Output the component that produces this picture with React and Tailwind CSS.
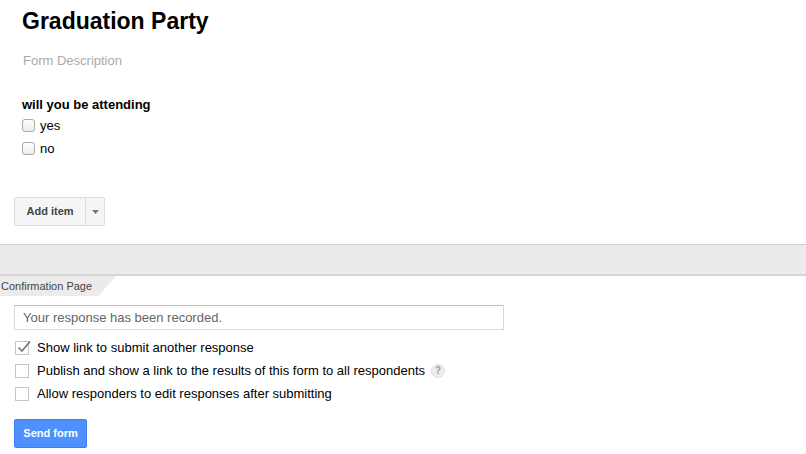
import React from 'react'

function RoundBox() {
  return (
    <span className="inline-block w-[13px] h-[13px] rounded-[3px] border border-[#a9a9a9] bg-gradient-to-b from-white to-[#ececec]" />
  )
}

function SquareBox({ checked }) {
  return (
    <span className="relative inline-block w-[14px] h-[14px] border border-[#c6c6c6] bg-white shrink-0">
      {checked && (
        <svg className="absolute -top-[3px] left-0" width="16" height="16" viewBox="0 0 16 16">
          <path d="M2.5 8.5 L6 12 L14 2.5" fill="none" stroke="#777" strokeWidth="1.7" />
        </svg>
      )}
    </span>
  )
}

export default function App() {
  return (
    <div className="w-[806px] h-[454px] bg-white overflow-hidden font-['Liberation_Sans',Arial,sans-serif] text-[13px] text-[#222]">
      <div className="pl-[22px] pt-[6px]">
        <h1 className="text-[23px] font-bold text-black leading-[30px]">Graduation Party</h1>
        <div className="pl-[1px] mt-[17px] text-[#aaa] leading-[16px]">Form Description</div>
        <div className="mt-[28px] font-bold text-black leading-[16px]">will you be attending</div>
        <div className="mt-[6px] flex flex-col gap-[10px]">
          <label className="flex items-center gap-[5px] leading-[13px] text-black">
            <RoundBox />
            yes
          </label>
          <label className="flex items-center gap-[5px] leading-[13px] text-black">
            <RoundBox />
            no
          </label>
        </div>
      </div>

      <div className="pl-[14px] mt-[42px]">
        <div className="inline-flex h-[29px] rounded-[2px] border border-[#dcdcdc] bg-[#f5f5f5] text-[11px] font-bold text-[#444]">
          <span className="w-[71px] flex items-center justify-center border-r border-[#dcdcdc]">Add item</span>
          <span className="w-[18px] flex items-center justify-center">
            <svg width="7" height="4" viewBox="0 0 7 4">
              <path d="M0 0 H7 L3.5 4 Z" fill="#777" />
            </svg>
          </span>
        </div>
      </div>

      <div className="mt-[18px] h-[32px] bg-[#ebebeb] border-t border-[#cfcfcf] border-b-2 border-b-[#d6d6d6]" />

      <div className="h-[20px] w-[116px] bg-[#ebebeb] [clip-path:polygon(0_0,100%_0,85%_100%,0_100%)] text-[11px] text-[#444] leading-[20px] pl-[1px]">
        Confirmation Page
      </div>

      <div className="pl-[14px] pt-[9px]">
        <div className="w-[490px] h-[25px] border border-[#d9d9d9] border-t-[#c0c0c0] px-[8px] flex items-center text-[#666]">
          Your response has been recorded.
        </div>
        <div className="mt-[11px] flex flex-col gap-[9px] text-black">
          <label className="flex items-center gap-[8px] leading-[14px] pl-[1px]">
            <SquareBox checked />
            Show link to submit another response
          </label>
          <label className="flex items-center gap-[8px] leading-[14px] pl-[1px]">
            <SquareBox />
            Publish and show a link to the results of this form to all respondents
            <span className="ml-[-2px] w-[14px] h-[14px] rounded-full bg-[#eee] border border-[#ddd] text-[10px] font-bold text-[#999] flex items-center justify-center leading-none">?</span>
          </label>
          <label className="flex items-center gap-[8px] leading-[14px] pl-[1px]">
            <SquareBox />
            Allow responders to edit responses after submitting
          </label>
        </div>
        <button className="mt-[18px] w-[73px] h-[29px] rounded-[2px] bg-[#4d90fe] border border-[#3b80f0] text-white text-[11px] font-bold">
          Send form
        </button>
      </div>
    </div>
  )
}
